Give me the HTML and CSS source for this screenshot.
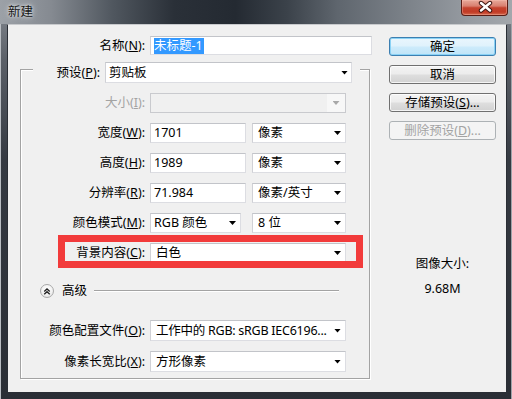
FILE: index.html
```html
<!DOCTYPE html>
<html lang="zh">
<head>
<meta charset="utf-8">
<title>新建</title>
<link rel="stylesheet" href="styles.css">
</head>
<body>
<div class="window">
  <div class="titlebar">
    <span class="title">新建</span>
    <div class="close">
      <svg width="46" height="16" viewBox="0 0 46 16">
        <path d="M19 3 L28 10.5 M28 3 L19 10.5" stroke="#3b1410" stroke-width="4.4" stroke-linecap="round" fill="none"/>
        <path d="M19 3 L28 10.5 M28 3 L19 10.5" stroke="#ffffff" stroke-width="2.5" stroke-linecap="round" fill="none"/>
      </svg>
    </div>
  </div>
  <div class="client">
    <div class="main">
      <div class="name-row">
        <span class="lbl name-lbl">名称(<u>N</u>):</span>
        <div class="field input name-field"><span class="sel">未标题-1</span></div>
      </div>
      <div class="group">
        <div class="preset-row">
          <span class="lbl preset-lbl">预设(<u>P</u>):</span>
          <div class="field dd preset-dd"><span class="txt">剪贴板</span><i class="arrow"></i></div>
        </div>
        <div class="row first">
          <span class="lbl dis">大小(<u>I</u>):</span>
          <div class="field dd full disabled"><span class="txt"></span><span class="dis-btn"><i class="arrow"></i></span></div>
        </div>
        <div class="row">
          <span class="lbl">宽度(<u>W</u>):</span>
          <div class="field input num">1701</div>
          <div class="field dd unit"><span class="txt">像素</span><i class="arrow"></i></div>
        </div>
        <div class="row">
          <span class="lbl">高度(<u>H</u>):</span>
          <div class="field input num">1989</div>
          <div class="field dd unit"><span class="txt">像素</span><i class="arrow"></i></div>
        </div>
        <div class="row">
          <span class="lbl">分辨率(<u>R</u>):</span>
          <div class="field input num">71.984</div>
          <div class="field dd unit"><span class="txt">像素/英寸</span><i class="arrow"></i></div>
        </div>
        <div class="row">
          <span class="lbl">颜色模式(<u>M</u>):</span>
          <div class="field dd mode"><span class="txt">RGB 颜色</span><i class="arrow"></i></div>
          <div class="field dd unit bits"><span class="txt">8 位</span><i class="arrow"></i></div>
        </div>
        <div class="row bg-row">
          <span class="lbl">背景内容(<u>C</u>):</span>
          <div class="field dd full"><span class="txt">白色</span><i class="arrow"></i></div>
          <div class="highlight"></div>
        </div>
        <div class="adv-row">
          <span class="adv-btn">
            <svg width="13" height="13" viewBox="0 0 13 13">
              <path d="M3.5 6.5 L6.5 3.8 L9.5 6.5 M3.5 9.5 L6.5 6.8 L9.5 9.5" stroke="#222" stroke-width="1.5" fill="none"/>
            </svg>
          </span>
          <span class="adv-lbl">高级</span>
          <span class="adv-line"></span>
        </div>
        <div class="row tall profile">
          <span class="lbl">颜色配置文件(<u>O</u>):</span>
          <div class="field dd full"><span class="txt tight">工作中的 RGB: sRGB IEC6196...</span><i class="arrow"></i></div>
        </div>
        <div class="row tall aspect">
          <span class="lbl">像素长宽比(<u>X</u>):</span>
          <div class="field dd full"><span class="txt">方形像素</span><i class="arrow"></i></div>
        </div>
      </div>
    </div>
    <div class="side">
      <div class="btn default">确定</div>
      <div class="btn">取消</div>
      <div class="btn">存储预设(<u>S</u>)...</div>
      <div class="btn disabled">删除预设(<u>D</u>)...</div>
      <div class="info">
        <div class="info-title">图像大小:</div>
        <div class="info-value">9.68M</div>
      </div>
    </div>
  </div>
</div>
</body>
</html>
```

FILE: styles.css
```css
* { box-sizing: border-box; }
html, body { margin: 0; padding: 0; }
body {
  width: 512px;
  height: 399px;
  overflow: hidden;
  font-family: "Noto Sans", "Noto Sans CJK SC", sans-serif;
  font-size: 12.5px;
  line-height: 16px;
  color: #000;
}
u { text-decoration: underline; text-underline-offset: 1px; }

.window {
  width: 512px;
  height: 399px;
  display: flex;
  flex-direction: column;
  background: linear-gradient(180deg, #868b92 0%, #5b6068 15%, #353a42 40%, #2a2e35 100%);
  box-shadow: inset 1px 0 0 #b9bdc2, inset -1px 0 0 #9ea3a9;
}

.titlebar {
  height: 24px;
  flex: none;
  display: flex;
  justify-content: space-between;
  align-items: flex-start;
  background: linear-gradient(90deg, #9ca1a7 0%, #858a91 10%, #50575f 22%, #2a3038 34%, #242a32 46%, #3b424a 56%, #5f666e 66%, #7d838a 80%, #979ca2 92%, #a3a7ac 100%);
}
.title {
  padding: 4px 0 0 8px;
  font-size: 12.5px;
  color: #161616;
  text-shadow: 0 0 6px rgba(235, 238, 242, 0.9), 0 0 3px rgba(235, 238, 242, 0.9);
}
.close {
  width: 47px;
  height: 16px;
  margin-right: 4px;
  border: 1px solid #5a1d15;
  border-top: none;
  border-radius: 0 0 4px 4px;
  background: linear-gradient(180deg, #e7a99a 0%, #d98070 40%, #c4432e 52%, #c23b26 80%, #d46a4e 100%);
  box-shadow: inset 0 0 0 1px rgba(255, 200, 190, 0.35);
}
.close svg { display: block; }

.client {
  flex: 1;
  margin: 0 5px 6px 7px;
  border: 1px solid #2a2e35;
  border-top-color: #c8cacd;
  background: #f0f0f0;
  display: flex;
}

.main {
  width: 364px;
  flex: none;
}

.lbl {
  display: block;
  flex: none;
  text-align: right;
  white-space: nowrap;
}
.lbl.dis { color: #a3a3a3; }

.field {
  height: 20px;
  background: #fff;
  border: 1px solid #dcdde2;
  border-top-color: #c2c4c9;
  border-left-color: #d0d1d6;
  display: flex;
  align-items: center;
  white-space: nowrap;
  overflow: hidden;
  flex: none;
}
.input { padding-left: 3px; }
.dd { padding: 0 4px 0 5px; }
.txt { flex: 1; overflow: hidden; }
.tight { letter-spacing: -0.25px; }

.arrow {
  display: block;
  flex: none;
  width: 7px;
  height: 4px;
  background: #000;
  clip-path: polygon(0 0, 100% 0, 50% 100%);
}

.name-row {
  display: flex;
  align-items: center;
  margin-top: 11px;
  height: 19px;
}
.name-lbl { width: 137px; }
.name-field {
  width: 222px;
  height: 19px;
  margin-left: 5px;
}
.sel {
  background: #3399ff;
  color: #fff;
  line-height: 16px;
  padding: 0 1px 0 0;
}

.group {
  margin: 14px 0 0 12px;
  width: 350px;
  height: 310px;
  border: 1px solid #a3a3a3;
  box-shadow: 1px 1px 0 #fff, inset 1px 1px 0 #fff;
}

.preset-row {
  display: flex;
  align-items: center;
  margin: -8px 0 0 12px;
  width: 327px;
  height: 21px;
  background: #f0f0f0;
}
.preset-lbl { width: 67px; }
.preset-dd {
  width: 247px;
  height: 21px;
  margin-left: 5px;
  padding-left: 3px;
  padding-right: 3px;
}

.row {
  display: flex;
  align-items: center;
  height: 20px;
  margin-top: 10px;
}
.row .lbl { width: 124px; margin-right: 5px; }
.row.tall { height: 21px; }
.row.tall .field { height: 21px; }
.row.profile { margin-top: 22px; }

.full { width: 196px; }
.num { width: 96px; }
.unit { width: 94px; margin-left: 6px; }
.mode { width: 91px; padding-left: 3px; }
.bits { margin-left: 11px; }

.field.disabled {
  background: #f0f0f0;
  border-color: #c9cace;
  padding: 0;
}
.dis-btn {
  width: 18px;
  height: 100%;
  background: #f7f7f7;
  display: flex;
  align-items: center;
  justify-content: center;
  flex: none;
}
.dis-btn .arrow { background: #a8a8a8; }

.bg-row { position: relative; }
.highlight {
  position: absolute;
  left: 37px;
  top: -8px;
  width: 305px;
  height: 33px;
  border: 7px solid #f23b3b;
}

.adv-row {
  display: flex;
  align-items: center;
  height: 14px;
  margin-top: 21px;
}
.adv-btn {
  width: 14px;
  height: 14px;
  margin-left: 19px;
  border: 1px solid #a9a9a9;
  border-radius: 50%;
  background: radial-gradient(circle at 50% 35%, #ffffff 0%, #f2f2f2 55%, #d9d9d9 100%);
  display: flex;
  align-items: center;
  justify-content: center;
}
.adv-btn svg { display: block; }
.adv-lbl {
  margin-left: 8px;
}
.adv-line {
  width: 245px;
  height: 2px;
  margin-left: 7px;
  border-top: 1px solid #a3a3a3;
  border-bottom: 1px solid #fff;
}

.side {
  width: 107px;
  margin: 12px 0 0 17px;
  display: flex;
  flex-direction: column;
}
.btn {
  height: 19px;
  margin-bottom: 9px;
  border: 1px solid #707070;
  border-radius: 3px;
  background: linear-gradient(180deg, #f3f3f3 0%, #ececec 48%, #dedede 52%, #d2d2d2 100%);
  box-shadow: inset 0 0 0 1px rgba(255, 255, 255, 0.75);
  display: flex;
  align-items: center;
  justify-content: center;
  white-space: nowrap;
}
.btn.default {
  border-color: #3c7fb1;
  background: linear-gradient(180deg, #eaf6fd 0%, #dff2fc 48%, #cdebfb 52%, #bfe4f8 100%);
  box-shadow: inset 0 0 0 1px #8ad2f5;
}
.btn.disabled {
  border-color: #adb2b5;
  background: #f4f4f4;
  box-shadow: none;
  color: #a3a3a3;
}

.info {
  margin-top: 107px;
  text-align: center;
}
.info-value { margin-top: 9px; }
```
